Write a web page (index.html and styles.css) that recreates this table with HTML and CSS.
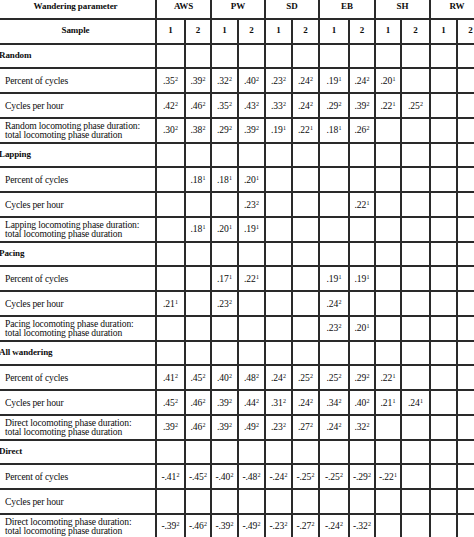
FILE: index.html
```html
<!DOCTYPE html>
<html>
<head>
<meta charset="utf-8">
<link rel="stylesheet" href="styles.css">
</head>
<body>
<table class="grid">
<colgroup>
<col class="c-label">
<col class="w29"><col class="w26">
<col class="w27"><col class="w27">
<col class="w27"><col class="w27">
<col class="w30"><col class="w26">
<col class="w26"><col class="w29">
<col class="w27"><col class="w27">
</colgroup>
<tbody>
<tr class="hd"><td class="ctr">Wandering parameter</td><td colspan="2">AWS</td><td colspan="2">PW</td><td colspan="2">SD</td><td colspan="2">EB</td><td colspan="2">SH</td><td colspan="2">RW</td></tr>
<tr class="hd"><td class="ctr">Sample</td><td>1</td><td>2</td><td>1</td><td>2</td><td>1</td><td>2</td><td>1</td><td>2</td><td>1</td><td>2</td><td>1</td><td>2</td></tr>

<tr><td class="sec">Random</td><td></td><td></td><td></td><td></td><td></td><td></td><td></td><td></td><td></td><td></td><td></td><td></td></tr>
<tr><td class="lab">Percent of cycles</td><td>.35<sup>2</sup></td><td>.39<sup>2</sup></td><td>.32<sup>2</sup></td><td>.40<sup>2</sup></td><td>.23<sup>2</sup></td><td>.24<sup>2</sup></td><td>.19<sup>1</sup></td><td>.24<sup>2</sup></td><td>.20<sup>1</sup></td><td></td><td></td><td></td></tr>
<tr><td class="lab">Cycles per hour</td><td>.42<sup>2</sup></td><td>.46<sup>2</sup></td><td>.35<sup>2</sup></td><td>.43<sup>2</sup></td><td>.33<sup>2</sup></td><td>.24<sup>2</sup></td><td>.29<sup>2</sup></td><td>.39<sup>2</sup></td><td>.22<sup>1</sup></td><td>.25<sup>2</sup></td><td></td><td></td></tr>
<tr><td class="lab">Random locomoting phase duration:<br>total locomoting phase duration</td><td>.30<sup>2</sup></td><td>.38<sup>2</sup></td><td>.29<sup>2</sup></td><td>.39<sup>2</sup></td><td>.19<sup>1</sup></td><td>.22<sup>1</sup></td><td>.18<sup>1</sup></td><td>.26<sup>2</sup></td><td></td><td></td><td></td><td></td></tr>

<tr><td class="sec">Lapping</td><td></td><td></td><td></td><td></td><td></td><td></td><td></td><td></td><td></td><td></td><td></td><td></td></tr>
<tr><td class="lab">Percent of cycles</td><td></td><td>.18<sup>1</sup></td><td>.18<sup>1</sup></td><td>.20<sup>1</sup></td><td></td><td></td><td></td><td></td><td></td><td></td><td></td><td></td></tr>
<tr><td class="lab">Cycles per hour</td><td></td><td></td><td></td><td>.23<sup>2</sup></td><td></td><td></td><td></td><td>.22<sup>1</sup></td><td></td><td></td><td></td><td></td></tr>
<tr><td class="lab">Lapping locomoting phase duration:<br>total locomoting phase duration</td><td></td><td>.18<sup>1</sup></td><td>.20<sup>1</sup></td><td>.19<sup>1</sup></td><td></td><td></td><td></td><td></td><td></td><td></td><td></td><td></td></tr>

<tr><td class="sec">Pacing</td><td></td><td></td><td></td><td></td><td></td><td></td><td></td><td></td><td></td><td></td><td></td><td></td></tr>
<tr><td class="lab">Percent of cycles</td><td></td><td></td><td>.17<sup>1</sup></td><td>.22<sup>1</sup></td><td></td><td></td><td>.19<sup>1</sup></td><td>.19<sup>1</sup></td><td></td><td></td><td></td><td></td></tr>
<tr><td class="lab">Cycles per hour</td><td>.21<sup>1</sup></td><td></td><td>.23<sup>2</sup></td><td></td><td></td><td></td><td>.24<sup>2</sup></td><td></td><td></td><td></td><td></td><td></td></tr>
<tr><td class="lab">Pacing locomoting phase duration:<br>total locomoting phase duration</td><td></td><td></td><td></td><td></td><td></td><td></td><td>.23<sup>2</sup></td><td>.20<sup>1</sup></td><td></td><td></td><td></td><td></td></tr>

<tr><td class="sec">All wandering</td><td></td><td></td><td></td><td></td><td></td><td></td><td></td><td></td><td></td><td></td><td></td><td></td></tr>
<tr><td class="lab">Percent of cycles</td><td>.41<sup>2</sup></td><td>.45<sup>2</sup></td><td>.40<sup>2</sup></td><td>.48<sup>2</sup></td><td>.24<sup>2</sup></td><td>.25<sup>2</sup></td><td>.25<sup>2</sup></td><td>.29<sup>2</sup></td><td>.22<sup>1</sup></td><td></td><td></td><td></td></tr>
<tr><td class="lab">Cycles per hour</td><td>.45<sup>2</sup></td><td>.46<sup>2</sup></td><td>.39<sup>2</sup></td><td>.44<sup>2</sup></td><td>.31<sup>2</sup></td><td>.24<sup>2</sup></td><td>.34<sup>2</sup></td><td>.40<sup>2</sup></td><td>.21<sup>1</sup></td><td>.24<sup>1</sup></td><td></td><td></td></tr>
<tr><td class="lab">Direct locomoting phase duration:<br>total locomoting phase duration</td><td>.39<sup>2</sup></td><td>.46<sup>2</sup></td><td>.39<sup>2</sup></td><td>.49<sup>2</sup></td><td>.23<sup>2</sup></td><td>.27<sup>2</sup></td><td>.24<sup>2</sup></td><td>.32<sup>2</sup></td><td></td><td></td><td></td><td></td></tr>

<tr><td class="sec">Direct</td><td></td><td></td><td></td><td></td><td></td><td></td><td></td><td></td><td></td><td></td><td></td><td></td></tr>
<tr><td class="lab">Percent of cycles</td><td>-.41<sup>2</sup></td><td>-.45<sup>2</sup></td><td>-.40<sup>2</sup></td><td>-.48<sup>2</sup></td><td>-.24<sup>2</sup></td><td>-.25<sup>2</sup></td><td>-.25<sup>2</sup></td><td>-.29<sup>2</sup></td><td>-.22<sup>1</sup></td><td></td><td></td><td></td></tr>
<tr><td class="lab">Cycles per hour</td><td></td><td></td><td></td><td></td><td></td><td></td><td></td><td></td><td></td><td></td><td></td><td></td></tr>
<tr><td class="lab">Direct locomoting phase duration:<br>total locomoting phase duration</td><td>-.39<sup>2</sup></td><td>-.46<sup>2</sup></td><td>-.39<sup>2</sup></td><td>-.49<sup>2</sup></td><td>-.23<sup>2</sup></td><td>-.27<sup>2</sup></td><td>-.24<sup>2</sup></td><td>-.32<sup>2</sup></td><td></td><td></td><td></td><td></td></tr>
</tbody>
</table>
</body>
</html>
```
FILE: styles.css
```css
html, body {
  margin: 0;
  padding: 0;
  background: #fff;
  overflow: hidden;
}
body {
  font-family: "Liberation Serif", "Times New Roman", serif;
  font-size: 9.6px;
  letter-spacing: -0.15px;
  color: #0d0d0d;
}
.grid {
  border-collapse: collapse;
  table-layout: fixed;
  width: 489px;
  margin-left: -6px;
  margin-top: -7px;
}
.c-label { width: 161px; }
.w26 { width: 26px; }
.w27 { width: 27px; }
.w29 { width: 29px; }
.w30 { width: 30px; }
.grid td {
  border: 2px solid #2a2a2a;
  height: 22.75px;
  padding: 0;
  text-align: center;
  vertical-align: middle;
  line-height: 9.6px;
  white-space: nowrap;
}
.grid .hd td {
  font-weight: bold;
  font-size: 9px;
  letter-spacing: -0.1px;
}
.grid td.sec {
  text-align: left;
  font-weight: bold;
  font-size: 9px;
  letter-spacing: -0.1px;
  padding-left: 3px;
}
.grid td.lab {
  text-align: left;
  padding-left: 9px;
}
.grid td.ctr {
  text-align: center;
}
sup {
  font-size: 6px;
  line-height: 0;
  vertical-align: 3px;
  margin-left: 0.5px;
}
```
